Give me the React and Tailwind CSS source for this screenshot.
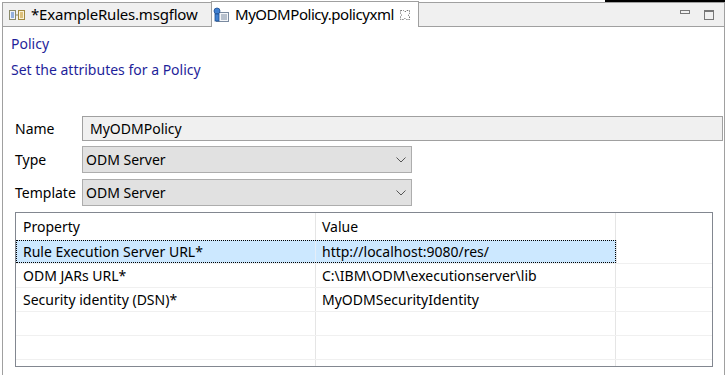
import React from "react";

function FlowIcon() {
  return (
    <svg width="16" height="10" viewBox="0 0 16 10" className="shrink-0">
      <rect x="0.5" y="0.5" width="6" height="9" fill="#eef3fb" stroke="#8a8a6a" />
      <rect x="9.5" y="0.5" width="6" height="9" fill="#fbf3d8" stroke="#a08a40" />
      <line x1="2" y1="3" x2="5" y2="3" stroke="#3a6fc0" />
      <line x1="2" y1="5" x2="5" y2="5" stroke="#3a6fc0" />
      <line x1="2" y1="7" x2="5" y2="7" stroke="#3a6fc0" />
      <line x1="11" y1="3" x2="14" y2="3" stroke="#c09020" />
      <line x1="11" y1="5" x2="14" y2="5" stroke="#c09020" />
      <line x1="11" y1="7" x2="14" y2="7" stroke="#c09020" />
      <line x1="7" y1="5" x2="9" y2="5" stroke="#8a8a6a" />
    </svg>
  );
}

function PolicyIcon() {
  return (
    <svg width="16" height="16" viewBox="0 0 16 16" className="shrink-0">
      <rect x="3.5" y="5.5" width="12" height="9" fill="#f4f6f9" stroke="#7a8aa0" />
      <line x1="8" y1="8" x2="14" y2="8" stroke="#7a8aa0" />
      <line x1="8" y1="10" x2="14" y2="10" stroke="#7a8aa0" />
      <line x1="8" y1="12" x2="14" y2="12" stroke="#7a8aa0" />
      <circle cx="4" cy="4" r="3" fill="#3f7fd0" stroke="#1f4f90" strokeWidth="0.8" />
      <rect x="2" y="7" width="4" height="7" fill="#3f7fd0" stroke="#1f4f90" strokeWidth="0.8" />
    </svg>
  );
}

function CloseIcon() {
  return (
    <svg width="12" height="12" viewBox="0 0 12 12" className="shrink-0">
      <path
        d="M1.5 1.5 L4.5 1.5 L6 3 L7.5 1.5 L10.5 1.5 L10.5 4.5 L9 6 L10.5 7.5 L10.5 10.5 L7.5 10.5 L6 9 L4.5 10.5 L1.5 10.5 L1.5 7.5 L3 6 L1.5 4.5 Z"
        fill="none"
        stroke="#777"
        strokeWidth="1"
        strokeDasharray="1.5 1"
      />
    </svg>
  );
}

function Chevron() {
  return (
    <svg width="10" height="6" viewBox="0 0 10 6">
      <path d="M0.5 0.5 L5 5 L9.5 0.5" fill="none" stroke="#555" strokeWidth="1" />
    </svg>
  );
}

const rows = [
  ["Rule Execution Server URL*", "http://localhost:9080/res/", true],
  ["ODM JARs URL*", "C:\\IBM\\ODM\\executionserver\\lib", false],
  ["Security identity (DSN)*", "MyODMSecurityIdentity", false],
  ["", "", false],
  ["", "", false],
];

export default function App() {
  return (
    <div
      className="w-[725px] h-[375px] bg-white relative overflow-hidden flex flex-col text-[14px] text-black"
      style={{ fontFamily: '"Noto Sans", "Open Sans", sans-serif' }}
    >
      <div className="absolute top-[0px] left-[605px] w-[120px] h-[2px] bg-black" />
      {/* tab bar */}
      <div className="h-[27px] flex items-end pl-[2px] shrink-0">
        <div className="w-[209px] h-[25px] bg-[#f0f0f0] border-t border-l border-b border-[#a0a0a0] flex items-center gap-[6px] pl-[6px] text-[15px]">
          <FlowIcon />
          <span className="leading-none tracking-[-0.2px]">*ExampleRules.msgflow</span>
        </div>
        <div className="w-[208px] h-[26px] bg-white border-t border-l border-r border-[#a0a0a0] flex items-center pl-[1px] text-[15px]">
          <PolicyIcon />
          <span className="leading-none ml-[6px] tracking-[-0.45px]">MyODMPolicy.policyxml</span>
          <span className="ml-[5px]">
            <CloseIcon />
          </span>
        </div>
        <div className="flex-1 h-[25px] bg-[#f0f0f0] border-t border-b border-r border-[#a0a0a0] flex items-center justify-end gap-[14px] pr-[10px]">
          <div className="w-[10px] h-[4px] border border-[#777] -mt-[6px]" />
          <div className="w-[10px] h-[10px] border border-[#777] border-t-2" />
        </div>
      </div>
      {/* content */}
      <div className="flex-1 ml-[2px] border-l border-r border-[#a0a0a0] flex flex-col">
        <div className="pl-[8px] pt-[7px] text-[#1f1f9a] text-[14px] flex flex-col gap-[6px]">
          <div className="h-[20px] leading-[20px]">Policy</div>
          <div className="h-[20px] leading-[20px]">Set the attributes for a Policy</div>
        </div>
        <div className="mt-[36px] pl-[12px] pr-[1px] flex flex-col">
          <div className="flex items-center h-[25px]">
            <div className="w-[67px]">Name</div>
            <div className="flex-1 h-[25px] bg-[#f0f0f0] border border-[#a0a0a0] flex items-center pl-[7px]">
              MyODMPolicy
            </div>
          </div>
          <div className="flex items-center h-[27px] mt-[5px]">
            <div className="w-[67px]">Type</div>
            <div className="w-[330px] h-[27px] bg-[#e1e1e1] border border-[#adadad] flex items-center justify-between pl-[3px] pr-[5px]">
              <span>ODM Server</span>
              <Chevron />
            </div>
          </div>
          <div className="flex items-center h-[27px] mt-[6px]">
            <div className="w-[67px]">Template</div>
            <div className="w-[330px] h-[27px] bg-[#e1e1e1] border border-[#adadad] flex items-center justify-between pl-[3px] pr-[5px]">
              <span>ODM Server</span>
              <Chevron />
            </div>
          </div>
          <div className="mt-[6px] w-[698px] h-[155px] border border-[#828790] flex flex-col overflow-hidden">
            <div className="flex h-[27px] shrink-0">
              <div className="w-[300px] flex items-center pl-[7px] border-r border-[#e5e5e5]">Property</div>
              <div className="w-[300px] flex items-center pl-[6px] border-r border-[#e5e5e5]">Value</div>
              <div className="flex-1" />
            </div>
            {rows.map(([p, v, sel], i) => (
              <div key={i} className="flex h-[24px] shrink-0 border-b border-[#f0f0f0]">
                <div
                  className={
                    sel
                      ? "w-[600px] flex bg-[#cce8ff] border border-dotted border-black"
                      : "w-[600px] flex"
                  }
                >
                  <div className={sel ? "w-[299px] flex items-center pl-[6px] border-r border-[#e5eef8]" : "w-[300px] flex items-center pl-[7px] border-r border-[#e5e5e5]"}>
                    {p}
                  </div>
                  <div className={sel ? "flex-1 flex items-center pl-[6px]" : "flex-1 flex items-center pl-[6px] border-r border-[#e5e5e5]"}>
                    {v}
                  </div>
                </div>
                <div className={sel ? "flex-1 border-l border-[#e5e5e5]" : "flex-1"} />
              </div>
            ))}
            <div className="flex flex-1">
              <div className="w-[300px] border-r border-[#e5e5e5]" />
              <div className="w-[300px] border-r border-[#e5e5e5]" />
            </div>
          </div>
        </div>
      </div>
    </div>
  );
}
